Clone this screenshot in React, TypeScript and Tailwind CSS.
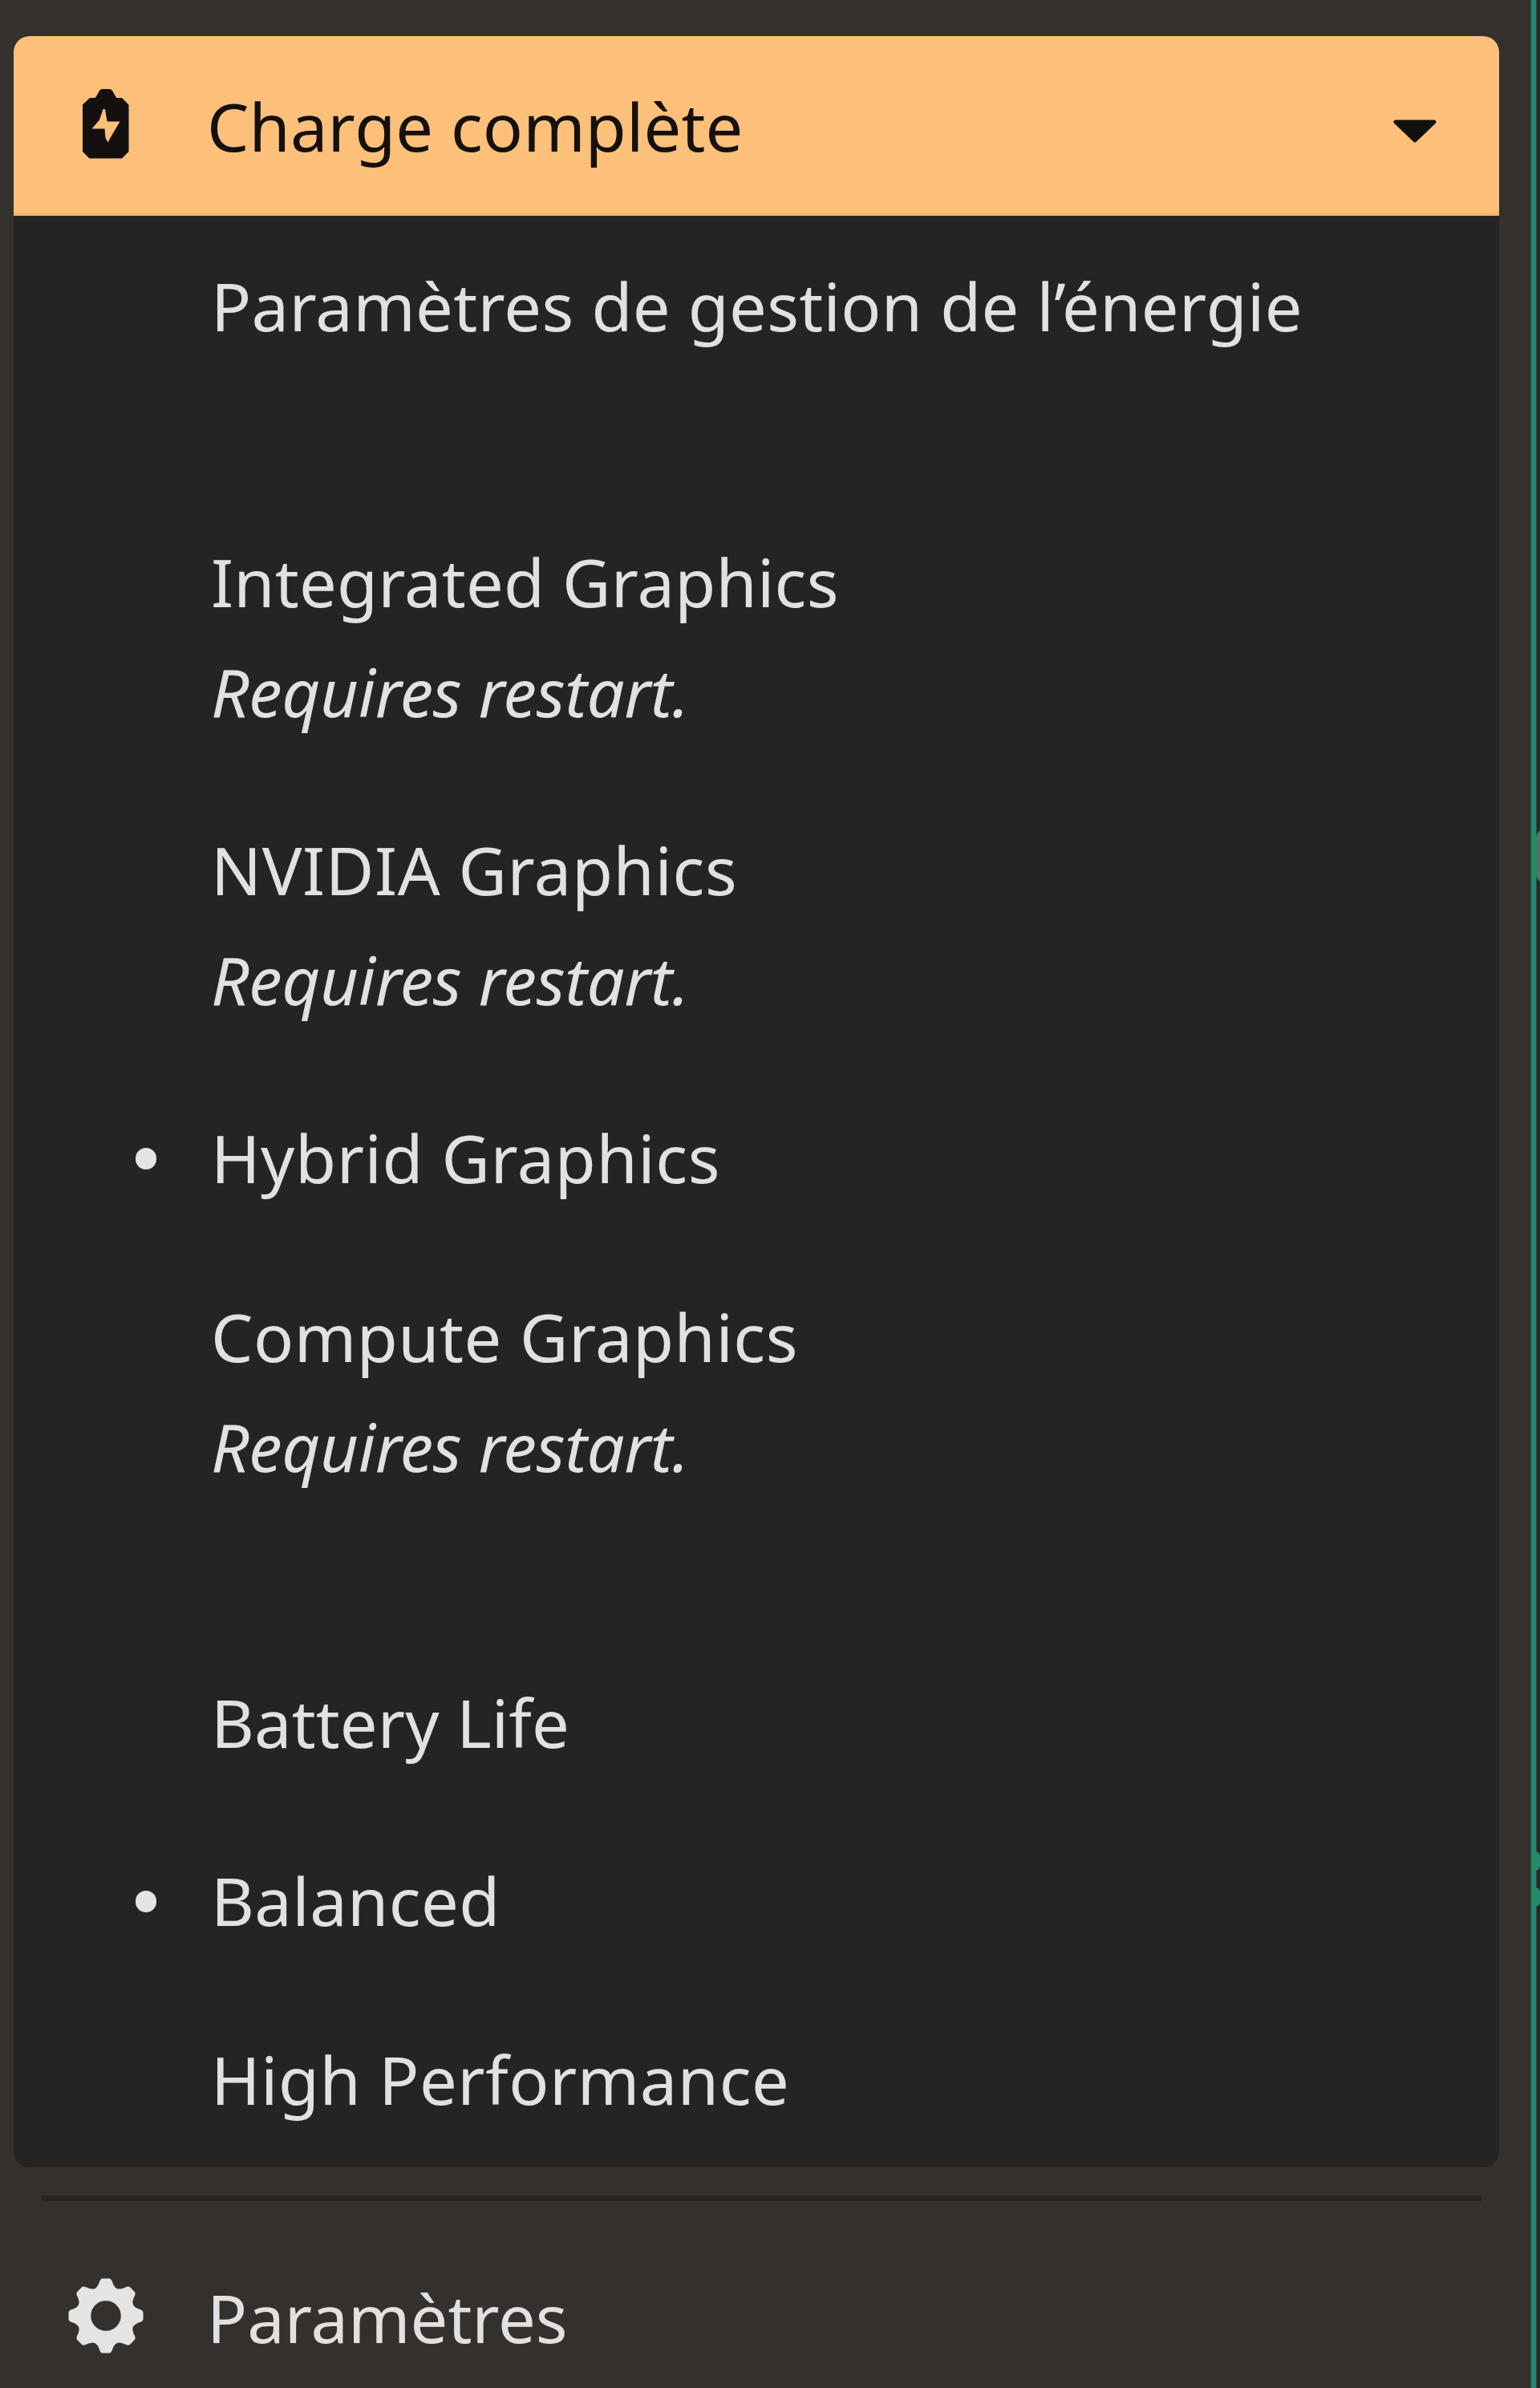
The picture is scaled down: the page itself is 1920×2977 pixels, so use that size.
type MenuItem = {
  label: string;
  tracking: string;
  hint?: string;
  selected?: boolean;
};

const graphicsItems: MenuItem[] = [
  {
    label: "Integrated Graphics",
    tracking: "tracking-[0.2px]",
    hint: "Requires restart.",
  },
  {
    label: "NVIDIA Graphics",
    tracking: "tracking-[0.6px]",
    hint: "Requires restart.",
  },
  {
    label: "Hybrid Graphics",
    tracking: "tracking-[0.6px]",
    selected: true,
  },
  {
    label: "Compute Graphics",
    tracking: "tracking-[0.5px]",
    hint: "Requires restart.",
  },
];

const profileItems: MenuItem[] = [
  { label: "Battery Life", tracking: "tracking-[0.1px]" },
  { label: "Balanced", tracking: "tracking-[0.4px]", selected: true },
  { label: "High Performance", tracking: "tracking-[0.5px]" },
];

// One tooth of the gear, pointing up, repeated every 45 degrees
const teeth = [0, 45, 90, 135, 180, 225, 270, 315];

function BatteryIcon() {
  return (
    <svg
      className="w-[96px] h-[96px] shrink-0 -mt-[3px]"
      viewBox="0 0 96 96"
    >
      <path
        fill="#14100f"
        fillRule="evenodd"
        d="M43.500 5h9q2 0 3.500 2l4 7 1.500 2h6.500L76.500 24.500V83L68 91.500H27.500L19 83V24.500L28 16h6.500L36 14l4-7q1.500-2 3.500-2ZM44.500 30 40 43.500 30.500 54.500H46.500L47.500 66 50.500 71.500 54 65 65.500 45.500H49.500L47 30Z"
      />
    </svg>
  );
}

function GearIcon() {
  return (
    <svg
      className="w-[96px] h-[96px] shrink-0 -mt-[3px]"
      viewBox="-48 -48 96 96"
    >
      <circle r="27.500" fill="none" stroke="#e4e4e4" strokeWidth="17.500" />
      {teeth.map((angle) => (
        <path
          key={angle}
          fill="#e4e4e4"
          transform={`rotate(${angle})`}
          d="M-15-33Q-10-36-8.500-41Q-7-46.500-4-46.500H4Q7-46.500 8.500-41Q10-36 15-33Z"
        />
      ))}
    </svg>
  );
}

function Row({ item }: { item: MenuItem }) {
  return (
    <div className="flex py-[42.700px]">
      <div className="w-[246px] h-[137px] shrink-0 flex items-center justify-end pr-[68px]">
        {item.selected && (
          <span className="w-[26px] h-[27px] rounded-full bg-[#e4e4e4] mt-[3px]" />
        )}
      </div>
      <div className="leading-[137px]">
        <div className={item.tracking}>{item.label}</div>
        {item.hint && (
          <div className="italic tracking-[-0.35px]">{item.hint}</div>
        )}
      </div>
    </div>
  );
}

export default function App() {
  return (
    <div className="relative flex w-[1920px] h-[2977px] overflow-hidden bg-[#34302e] font-['Noto_Sans',sans-serif] text-[83px] text-[#e1e1e1] whitespace-nowrap">
      <div className="w-[1908px] shrink-0 pl-[17px] pr-[39px] pt-[45px]">
        {/* Power menu */}
        <div className="rounded-[20px] overflow-hidden bg-[#252422]">
          <div className="flex items-center h-[224px] bg-[#fcc07b] border-b-4 border-[#fcb55f] text-[#14100f] pl-[67px] pr-[57px]">
            <BatteryIcon />
            <span className="flex-1 pl-[78px] pt-[5px] tracking-[0.1px]">
              Charge complète
            </span>
            <svg
              className="w-[96px] h-[96px] mt-[16px] mr-[0.500px]"
              viewBox="0 0 96 96"
            >
              <path
                fill="#14100f"
                stroke="#14100f"
                strokeWidth="5"
                strokeLinejoin="round"
                d="M24 37H72L48 60Z"
              />
            </svg>
          </div>

          <Row
            item={{
              label: "Paramètres de gestion de l’énergie",
              tracking: "tracking-[0.3px]",
            }}
          />
          <div className="h-[121.600px]" />
          {graphicsItems.map((item) => (
            <Row key={item.label} item={item} />
          ))}
          <div className="h-[121.600px]" />
          {profileItems.map((item) => (
            <Row key={item.label} item={item} />
          ))}
        </div>

        <div className="h-[7px] mt-[35px] ml-[35px] mr-[22px] bg-[#252422]" />

        {/* Settings entry */}
        <div className="flex items-center h-[222px] mt-[33px] pl-[67px]">
          <GearIcon />
          <span className="pl-[78px] pt-[3px]">Paramètres</span>
        </div>
      </div>

      {/* Window border and what shows behind it */}
      <div className="w-[8px] bg-[#228b6c] border-x border-[#2e5347]" />
      <div className="flex-1 bg-[#2c2625]" />
      <div className="absolute left-[1915px] top-[1034px] w-[10px] h-[66px] rounded-l-full bg-[#6c6564] border-l-2 border-[#228b6c]" />
      <div className="absolute left-[1914px] top-[2308px] w-[6px] h-[24px] rounded-r-full bg-[#228b6c]" />
      <div className="absolute left-[1914px] top-[2353px] w-[6px] h-[24px] rounded-r-full bg-[#228b6c]" />
    </div>
  );
}
